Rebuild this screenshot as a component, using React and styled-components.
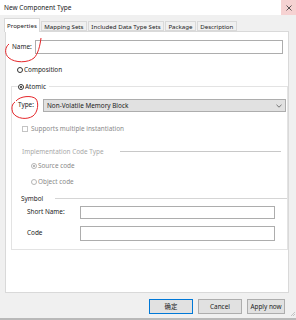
import React from 'react';
import styled, { createGlobalStyle } from 'styled-components';

const GlobalStyle = createGlobalStyle`
  html, body {
    margin: 0;
    padding: 0;
    background: #f0f0f0;
  }
  body {
    font-family: "Noto Sans", "Noto Sans CJK SC", sans-serif;
    font-size: 6.4px;
    color: #222;
  }
`;

const Dialog = styled.div`
  position: relative;
  display: flex;
  flex-direction: column;
  width: 296px;
  height: 320px;
  box-sizing: border-box;
  background: #f0f0f0;
  border-bottom: 2px solid #b9b9b9;
  overflow: hidden;
`;

const TitleBar = styled.div`
  display: flex;
  align-items: center;
  justify-content: space-between;
  height: 15px;
  flex: none;
  background: #fff;
  padding-left: 4px;
`;

const TitleText = styled.span`
  font-size: 6.5px;
`;

const CloseButton = styled.div`
  width: 15px;
  height: 15px;
  background: #f6d2d2;
  display: flex;
  align-items: center;
  justify-content: center;
`;

const Body = styled.div`
  flex: 1;
  display: flex;
  flex-direction: column;
  padding: 3px 7px 0 5px;
`;

const TabStrip = styled.div`
  display: flex;
  align-items: flex-end;
  height: 13px;
  margin-left: -1px;
  position: relative;
  z-index: 1;
`;

const Tab = styled.div`
  height: ${(p) => (p.$active ? '14px' : '10px')};
  margin-bottom: ${(p) => (p.$active ? '-1px' : '0')};
  padding: 0 ${(p) => (p.$active ? 2 : 2.4)}px;
  margin-right: 1px;
  display: flex;
  align-items: center;
  box-sizing: border-box;
  background: ${(p) => (p.$active ? '#fff' : '#f0f0f0')};
  border: 1px solid #d9d9d9;
  border-bottom: ${(p) => (p.$active ? 'none' : '1px solid #d9d9d9')};
  font-size: 6.15px;
  white-space: nowrap;
`;

const Panel = styled.div`
  height: 262px;
  box-sizing: border-box;
  background: #fff;
  border: 1px solid #d9d9d9;
  padding: 8px 5px 0 6px;
  display: flex;
  flex-direction: column;
`;

const FieldRow = styled.div`
  display: flex;
  align-items: center;
  padding-left: ${(p) => p.$indent || 0}px;
  margin-top: ${(p) => p.$top || 0}px;
`;

const Label = styled.span`
  width: ${(p) => p.$width}px;
  flex: none;
  margin-top: -2px;
`;

const TextInput = styled.div`
  width: ${(p) => p.$width}px;
  height: ${(p) => p.$height || 14}px;
  box-sizing: border-box;
  border: 1px solid #adadad;
  background: #fff;
`;

const RadioRow = styled.div`
  display: flex;
  align-items: center;
  gap: 1px;
  padding-left: ${(p) => p.$indent || 0}px;
  margin-top: ${(p) => p.$top || 0}px;
  color: ${(p) => (p.$disabled ? '#8a8a8a' : '#222')};
`;

const RadioCircle = styled.span`
  width: 6px;
  height: 6px;
  border-radius: 50%;
  box-sizing: border-box;
  border: 1px solid ${(p) => (p.$disabled ? '#b5b5b5' : '#333')};
  background: #fff;
  display: flex;
  align-items: center;
  justify-content: center;
  &::after {
    content: '';
    width: 2px;
    height: 2px;
    border-radius: 50%;
    background: ${(p) => (p.$disabled ? '#a0a0a0' : '#222')};
    display: ${(p) => (p.$checked ? 'block' : 'none')};
  }
`;

const CheckBox = styled.span`
  width: 6px;
  height: 6px;
  box-sizing: border-box;
  border: 1px solid #c4c4c4;
  background: #fff;
  margin-right: 2px;
`;

const GroupBox = styled.fieldset`
  flex: none;
  margin: 8px 0 0 -1px;
  width: 277px;
  height: 168px;
  box-sizing: border-box;
  border: 1px solid #e3e3e3;
  padding: 0 0 0 6px;
  display: flex;
  flex-direction: column;
`;

const Legend = styled.legend`
  padding: 0 3px 0 0;
  margin-left: 0;
`;

const Select = styled.div`
  width: 243px;
  height: 13px;
  box-sizing: border-box;
  border: 1px solid #adadad;
  background: #e1e1e1;
  display: flex;
  align-items: center;
  justify-content: space-between;
  padding: 0 3px 0 3px;
`;

const SectionHeader = styled.div`
  display: flex;
  align-items: center;
  padding-left: ${(p) => p.$indent}px;
  margin-top: ${(p) => p.$top}px;
  color: ${(p) => (p.$muted ? '#a8a8a8' : '#222')};
  &::after {
    content: '';
    flex: none;
    width: ${(p) => p.$line}px;
    margin-left: auto;
    margin-right: ${(p) => p.$lineEnd}px;
    border-top: 1px solid ${(p) => (p.$muted ? '#c8c8c8' : '#d5d5d5')};
  }
`;

const Footer = styled.div`
  display: flex;
  justify-content: flex-end;
  gap: 5px;
  padding: 6px 4px 0 0;
`;

const Button = styled.div`
  height: 15px;
  width: ${(p) => p.$width}px;
  box-sizing: border-box;
  border: 1px solid ${(p) => (p.$primary ? '#0078d7' : '#adadad')};
  background: #e1e1e1;
  display: flex;
  align-items: center;
  justify-content: center;
`;

const Grip = styled.svg`
  position: absolute;
  right: 1px;
  bottom: 2px;
`;

const Annotations = styled.svg`
  position: absolute;
  left: 0;
  top: 0;
  pointer-events: none;
`;

export default function App() {
  return (
    <Dialog>
      <GlobalStyle />
      <TitleBar>
        <TitleText>New Component Type</TitleText>
        <CloseButton>
          <svg width="6" height="6" viewBox="0 0 6 6">
            <path d="M0.5 0.5 L5.5 5.5 M5.5 0.5 L0.5 5.5" stroke="#333" strokeWidth="0.8" />
          </svg>
        </CloseButton>
      </TitleBar>
      <Body>
        <TabStrip>
          <Tab $active>Properties</Tab>
          <Tab>Mapping Sets</Tab>
          <Tab>Included Data Type Sets</Tab>
          <Tab>Package</Tab>
          <Tab>Description</Tab>
        </TabStrip>
        <Panel>
          <FieldRow>
            <Label $width={23}>Name:</Label>
            <TextInput $width={248} />
          </FieldRow>
          <RadioRow $indent={5} $top={11}>
            <RadioCircle />
            Composition
          </RadioRow>
          <GroupBox>
            <Legend>
              <RadioRow>
                <RadioCircle $checked />
                Atomic
              </RadioRow>
            </Legend>
            <FieldRow $top={8}>
              <Label $width={25}>Type:</Label>
              <Select>
                Non-Volatile Memory Block
                <svg width="6" height="4" viewBox="0 0 6 4">
                  <path d="M0.5 0.8 L3 3.2 L5.5 0.8" fill="none" stroke="#555" strokeWidth="0.8" />
                </svg>
              </Select>
            </FieldRow>
            <RadioRow $indent={4} $top={12} $disabled>
              <CheckBox />
              Supports multiple instantiation
            </RadioRow>
            <SectionHeader $indent={4} $top={14} $muted $line={161} $lineEnd={6}>
              Implementation Code Type
            </SectionHeader>
            <RadioRow $indent={13} $top={5} $disabled>
              <RadioCircle $checked $disabled />
              Source code
            </RadioRow>
            <RadioRow $indent={13} $top={7} $disabled>
              <RadioCircle $disabled />
              Object code
            </RadioRow>
            <SectionHeader $indent={3} $top={8} $line={232} $lineEnd={0}>
              Symbol
            </SectionHeader>
            <FieldRow $indent={9} $top={3}>
              <Label $width={53}>Short Name:</Label>
              <TextInput $width={195} $height={13} />
            </FieldRow>
            <FieldRow $indent={9} $top={7}>
              <Label $width={53}>Code</Label>
              <TextInput $width={195} $height={15} />
            </FieldRow>
          </GroupBox>
        </Panel>
        <Footer>
          <Button $primary $width={44}>确定</Button>
          <Button $width={44}>Cancel</Button>
          <Button $width={38}>Apply now</Button>
        </Footer>
      </Body>
      <Grip width="5" height="5" viewBox="0 0 5 5">
        <path d="M5 1 L1 5 M5 3 L3 5" stroke="#b0b0b0" strokeWidth="0.7" />
      </Grip>
      <Annotations width="296" height="320" viewBox="0 0 296 320">
        <path
          d="M41 38 C40 46 38 54 34 58 C28 63 15 63 9 58 C4 54 5 47 9 44"
          fill="none"
          stroke="#e5262a"
          strokeWidth="1"
        />
        <path
          d="M16 101 C20 96 32 95 36 99 C39 103 38 112 33 116 C27 120 17 119 13 113 C11 108 12 104 15 102"
          fill="none"
          stroke="#e5262a"
          strokeWidth="1"
        />
      </Annotations>
    </Dialog>
  );
}
